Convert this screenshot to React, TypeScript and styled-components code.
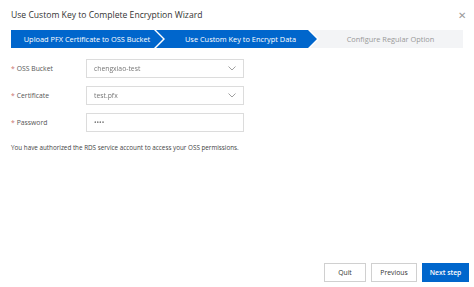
import React from 'react';
import styled, { createGlobalStyle } from 'styled-components';

const GlobalStyle = createGlobalStyle`
  * { margin: 0; padding: 0; box-sizing: border-box; }
  html, body, #root { height: 100%; }
  body {
    font-family: "Open Sans", "Liberation Sans", sans-serif;
    background: #fff;
    color: #333;
    overflow: hidden;
  }
`;

const blue = '#0066cc';

const Dialog = styled.div`
  display: flex;
  flex-direction: column;
  height: 100vh;
  padding: 0 11px 5px 11px;
`;

const Header = styled.div`
  display: flex;
  align-items: center;
  justify-content: space-between;
  height: 30px;
`;

const Title = styled.h1`
  font-size: 8.6px;
  font-weight: 400;
  color: #333;
`;

const Close = styled.span`
  font-size: 10px;
  color: #999;
  line-height: 1;
  margin-right: -3px;
`;

const StepBar = styled.div`
  display: flex;
  height: 18px;
  background: #fff;
`;

const Step = styled.div<{ $state: 'done' | 'active' | 'todo'; $w?: number; $first?: boolean }>`
  position: relative;
  display: flex;
  align-items: center;
  justify-content: center;
  font-size: 7.4px;
  white-space: nowrap;
  color: ${({ $state }) => ($state === 'todo' ? '#999' : '#fff')};
  background: ${({ $state }) => ($state === 'todo' ? '#f3f4f6' : blue)};
  ${({ $w }) => ($w ? `width: ${$w}px; flex-shrink: 0;` : 'flex: 1;')}
  margin-left: ${({ $first }) => ($first ? '0' : '-7px')};
  padding-left: ${({ $first }) => ($first ? '0' : '8px')};
  z-index: ${({ $state }) => ($state === 'todo' ? 1 : $state === 'active' ? 2 : 3)};
  clip-path: ${({ $state, $first }) =>
    $state === 'todo'
      ? 'polygon(0 0, 100% 0, 100% 100%, 0 100%, 9px 50%)'
      : $first
      ? 'polygon(0 0, calc(100% - 9px) 0, 100% 50%, calc(100% - 9px) 100%, 0 100%)'
      : 'polygon(0 0, calc(100% - 9px) 0, 100% 50%, calc(100% - 9px) 100%, 0 100%, 9px 50%)'};
`;

const Form = styled.div`
  display: flex;
  flex-direction: column;
  gap: 8px;
  margin-top: 11px;
`;

const Row = styled.div`
  display: flex;
  align-items: center;
  height: 19px;
`;

const Label = styled.label`
  width: 75px;
  font-size: 6.8px;
  color: #555;
  span { color: #c9726e; margin-right: 2px; }
`;

const Field = styled.div`
  width: 158px;
  height: 19px;
  border: 1px solid #dcdcdc;
  display: flex;
  align-items: center;
  justify-content: space-between;
  padding: 0 7px;
  font-size: 6.8px;
  color: #999;
`;

const Blurred = styled.span`
  filter: blur(0.7px);
  color: #777;
`;

const Notice = styled.p`
  margin-top: 11px;
  font-size: 6.3px;
  color: #444;
`;

const Footer = styled.div`
  margin-top: auto;
  display: flex;
  justify-content: flex-end;
  gap: 5px;
  margin-right: -6px;
`;

const Button = styled.button<{ $primary?: boolean; $w: number }>`
  width: ${({ $w }) => $w}px;
  height: 19px;
  font-family: inherit;
  font-size: 6.8px;
  font-weight: ${({ $primary }) => ($primary ? 600 : 400)};
  color: ${({ $primary }) => ($primary ? '#fff' : '#333')};
  background: ${({ $primary }) => ($primary ? blue : '#fff')};
  border: 1px solid ${({ $primary }) => ($primary ? blue : '#d0d0d0')};
`;

const Chevron = () => (
  <svg width="8" height="5" viewBox="0 0 8 5" fill="none">
    <path d="M0.5 0.5 L4 4 L7.5 0.5" stroke="#888" strokeWidth="0.8" />
  </svg>
);

const App: React.FC = () => (
  <>
    <GlobalStyle />
    <Dialog>
      <Header>
        <Title>Use Custom Key to Complete Encryption Wizard</Title>
        <Close>✕</Close>
      </Header>
      <StepBar>
        <Step $state="done" $first $w={152}>Upload PFX Certificate to OSS Bucket</Step>
        <Step $state="active" $w={161}>Use Custom Key to Encrypt Data</Step>
        <Step $state="todo">Configure Regular Option</Step>
      </StepBar>
      <Form>
        <Row>
          <Label><span>*</span>OSS Bucket</Label>
          <Field><Blurred>chengxiao-test</Blurred><Chevron /></Field>
        </Row>
        <Row>
          <Label><span>*</span>Certificate</Label>
          <Field><Blurred>test.pfx</Blurred><Chevron /></Field>
        </Row>
        <Row>
          <Label><span>*</span>Password</Label>
          <Field><Blurred>••••</Blurred></Field>
        </Row>
      </Form>
      <Notice>You have authorized the RDS service account to access your OSS permissions.</Notice>
      <Footer>
        <Button $w={42}>Quit</Button>
        <Button $w={46}>Previous</Button>
        <Button $primary $w={47}>Next step</Button>
      </Footer>
    </Dialog>
  </>
);

export default App;
